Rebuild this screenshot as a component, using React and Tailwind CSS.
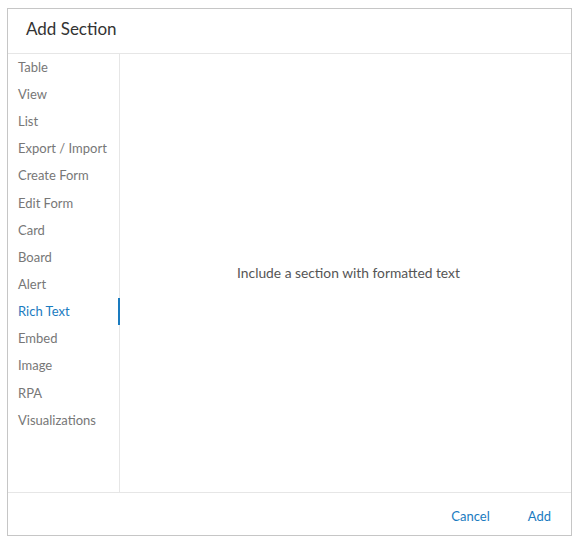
import { useState } from 'react';

const sections = [
    'Table',
    'View',
    'List',
    'Export / Import',
    'Create Form',
    'Edit Form',
    'Card',
    'Board',
    'Alert',
    'Rich Text',
    'Embed',
    'Image',
    'RPA',
    'Visualizations',
];

export default function App() {
    const [selected, setSelected] = useState('Rich Text');

    return (
        <div className="w-[577px] h-[542px] bg-white pt-[8px] pl-[7px]" style={{ fontFamily: 'Lato, "Noto Sans", sans-serif' }}>
            <div className="w-[565px] h-[528px] border border-[#c6c6c6] flex flex-col bg-white">
                <div className="h-[45px] shrink-0 border-b border-[#e6e6e6] flex items-start pt-[7px] pl-[18px]">
                    <h2 className="text-[17px] text-[#333]">Add Section</h2>
                </div>

                <div className="flex flex-1 min-h-0">
                    <div className="w-[112px] shrink-0 border-r border-[#e6e6e6]">
                        {sections.map(name => {
                            const active = name === selected;
                            return (
                                <button
                                    key={name}
                                    onClick={() => setSelected(name)}
                                    className={`block w-full h-[27.15px] text-left pl-[10px] text-[13px] relative ${active ? 'text-[#1a7bbf]' : 'text-[#777]'}`}
                                >
                                    {name}
                                    {active && <span className="absolute right-[-1px] top-0 h-[27px] w-[2px] bg-[#1a7bbf]"></span>}
                                </button>
                            );
                        })}
                    </div>
                    <div className="flex-1 flex items-center justify-center pl-[6px]">
                        <p className="text-[13.8px] text-[#555]">Include a section with formatted text</p>
                    </div>
                </div>

                <div className="h-[43px] shrink-0 border-t border-[#e6e6e6] flex items-center justify-end pt-[5px] pr-[20px] gap-[38px]">
                    <button className="text-[13px] text-[#1a7bbf]">Cancel</button>
                    <button className="text-[13px] text-[#1a7bbf]">Add</button>
                </div>
            </div>
        </div>
    );
}
